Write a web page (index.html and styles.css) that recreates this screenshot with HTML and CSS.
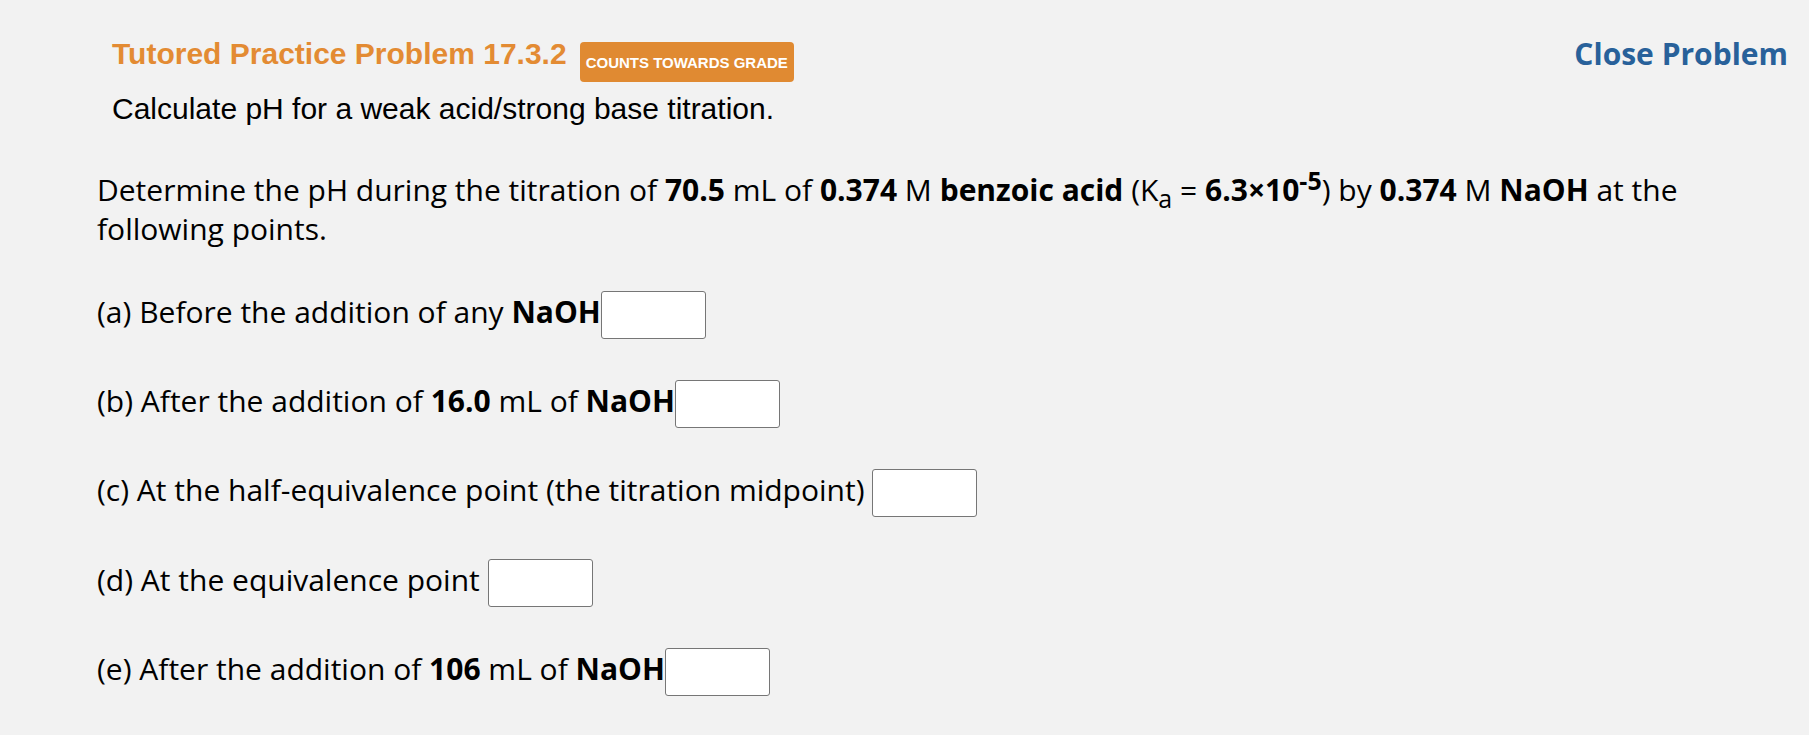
FILE: index.html
```html
<!DOCTYPE html>
<html lang="en">
<head>
<meta charset="utf-8">
<title>Tutored Practice Problem 17.3.2</title>
<link rel="stylesheet" href="styles.css">
</head>
<body>
<header class="top">
  <div class="title-group">
    <h1 class="title">Tutored Practice Problem 17.3.2</h1>
    <span class="badge">COUNTS TOWARDS GRADE</span>
  </div>
  <a class="close" href="#">Close Problem</a>
</header>
<p class="subtitle">Calculate pH for a weak acid/strong base titration.</p>
<main class="question">
  <p class="intro">Determine the pH during the titration of <b>70.5</b> mL of <b>0.374</b> M <b>benzoic acid</b> (K<sub>a</sub> = <b>6.3×10<sup>-5</sup></b>) by <b>0.374</b> M <b>NaOH</b> at the following points.</p>
  <div class="items">
    <p class="item">(a) Before the addition of any <b>NaOH</b><span class="answer"></span></p>
    <p class="item">(b) After the addition of <b>16.0</b> mL of <b>NaOH</b><span class="answer"></span></p>
    <p class="item">(c) At the half-equivalence point (the titration midpoint) <span class="answer"></span></p>
    <p class="item">(d) At the equivalence point <span class="answer"></span></p>
    <p class="item">(e) After the addition of <b>106</b> mL of <b>NaOH</b><span class="answer"></span></p>
  </div>
</main>
</body>
</html>
```

FILE: styles.css
```css
html, body {
  margin: 0;
  padding: 0;
  background: #f2f2f2;
}

body {
  font-family: "Open Sans", "Liberation Sans", sans-serif;
  color: #000;
}

.top {
  display: flex;
  justify-content: space-between;
  align-items: flex-start;
  padding: 37px 21px 0 112px;
}

.title-group {
  display: flex;
  align-items: flex-start;
}

.title {
  margin: 0;
  font-family: "Liberation Sans", Arial, sans-serif;
  font-weight: 700;
  font-size: 30px;
  line-height: 34px;
  color: #e38b33;
}

.badge {
  display: flex;
  align-items: center;
  height: 40px;
  box-sizing: border-box;
  margin: 5px 0 0 13px;
  padding: 0 6px;
  border-radius: 4px;
  background: #e08a32;
  color: #fff;
  font-family: "Liberation Sans", Arial, sans-serif;
  font-weight: 700;
  font-size: 15px;
}

.close {
  font-family: "Open Sans", sans-serif;
  font-weight: 700;
  font-size: 30px;
  line-height: 34px;
  color: #28619a;
  text-decoration: none;
}

.subtitle {
  margin: 10px 0 0;
  padding-left: 112px;
  font-family: "Liberation Sans", Arial, sans-serif;
  font-size: 30px;
  line-height: 34px;
}

.question {
  padding-left: 97px;
  max-width: 1645px;
  font-size: 30px;
  line-height: 39px;
}

.question b {
  font-weight: 700;
}

.question sub,
.question sup {
  line-height: 0;
}

.intro {
  margin: 43.5px 0 0;
}

.items {
  display: flex;
  flex-direction: column;
  gap: 41.25px;
  margin-top: 43.3px;
}

.item {
  margin: 0;
}

.answer {
  display: inline-block;
  width: 105px;
  height: 48px;
  box-sizing: border-box;
  border: 1px solid #767676;
  border-radius: 3px;
  background: #fff;
  vertical-align: -16px;
}
```
